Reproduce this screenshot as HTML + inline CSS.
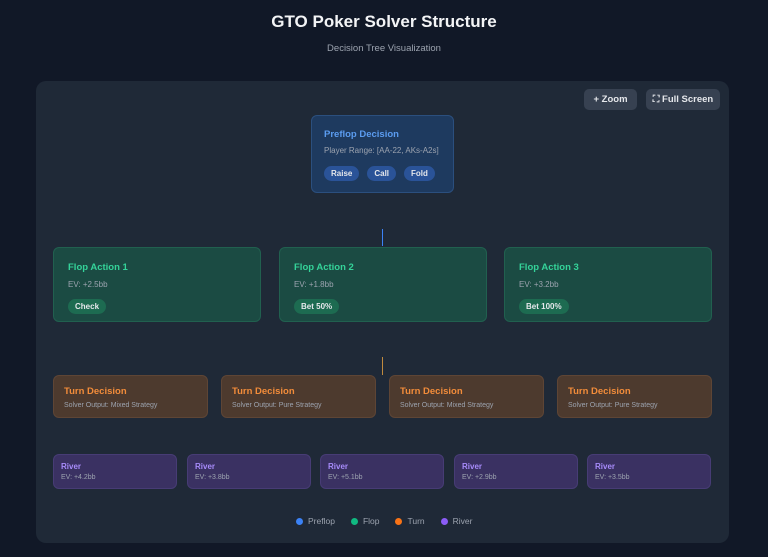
<!DOCTYPE html>
<html><head><style>
*{box-sizing:border-box;margin:0;padding:0}
body{width:768px;height:557px;background:#111827;font-family:"Liberation Sans",sans-serif;position:relative;overflow:hidden;color:#d1d5db}
.a{position:absolute}
h1{position:absolute;left:0;width:768px;top:12px;text-align:center;font-size:17px;font-weight:bold;color:#f3f4f6}
.sub{left:0;width:768px;top:43px;text-align:center;font-size:9.5px;color:#9ca3af}
.panel{left:36px;top:81px;width:693px;height:462px;background:#1f2937;border-radius:10px}
.btn{background:#374151;border-radius:5px;color:#e5e7eb;font-size:9.5px;font-weight:bold;display:flex;align-items:center;justify-content:center;height:21px;top:89px}
.box{border-radius:6px}
.pre{left:311px;top:115px;width:143px;height:78px;background:#1e3a5f;border:1px solid #2b4f7e}
.t{font-size:9.5px;font-weight:bold}
.s{font-size:8px;color:#9ca3af}
.pill{display:inline-block;border-radius:9px;font-size:8px;font-weight:bold;padding:3px 7px;margin-right:8px;color:#e5e7eb}
.flop{top:247px;width:208px;height:75px;background:#1b4b43;border:1px solid #21604f;padding:14px 14px}
.turn{top:375px;width:155px;height:43px;background:#4d3a2e;border:1px solid #5e4535;padding:10px 10px}
.riv{top:454px;width:124px;height:35px;background:#3a3162;border:1px solid #473c75;padding:7px 7px}
.dot{display:inline-block;width:7px;height:7px;border-radius:50%;margin-right:5px;vertical-align:-1px}
</style></head><body>
<h1>GTO Poker Solver Structure</h1>
<div class="a sub">Decision Tree Visualization</div>
<div class="a panel"></div>
<div class="a btn" style="left:584px;width:53px">+&nbsp;Zoom</div>
<div class="a btn" style="left:646px;width:74px">⛶&nbsp;Full Screen</div>
<div class="a box pre" style="padding:13px 12px">
<div class="t" style="color:#5b9cf0">Preflop Decision</div>
<div class="s" style="margin-top:6px">Player Range: [AA-22, AKs-A2s]</div>
<div style="margin-top:8px;white-space:nowrap"><span class="pill" style="background:#2a5398">Raise</span><span class="pill" style="background:#2a5398">Call</span><span class="pill" style="background:#2a5398">Fold</span></div>
</div>
<div class="a" style="left:382px;top:229px;width:1px;height:17px;background:#3b82f6"></div>
<div class="a" style="left:382px;top:357px;width:1px;height:18px;background:#c08a3e"></div>
<div class="a box flop" style="left:53px"><div class="t" style="color:#34d399">Flop Action 1</div><div class="s" style="margin-top:7px">EV: +2.5bb</div><div style="margin-top:7px"><span class="pill" style="background:#1d6b51">Check</span></div></div>
<div class="a box flop" style="left:279px"><div class="t" style="color:#34d399">Flop Action 2</div><div class="s" style="margin-top:7px">EV: +1.8bb</div><div style="margin-top:7px"><span class="pill" style="background:#1d6b51">Bet 50%</span></div></div>
<div class="a box flop" style="left:504px"><div class="t" style="color:#34d399">Flop Action 3</div><div class="s" style="margin-top:7px">EV: +3.2bb</div><div style="margin-top:7px"><span class="pill" style="background:#1d6b51">Bet 100%</span></div></div>
<div class="a box turn" style="left:53px"><div class="t" style="color:#f28c3a">Turn Decision</div><div class="s" style="font-size:7px;margin-top:5px">Solver Output: Mixed Strategy</div></div>
<div class="a box turn" style="left:221px"><div class="t" style="color:#f28c3a">Turn Decision</div><div class="s" style="font-size:7px;margin-top:5px">Solver Output: Pure Strategy</div></div>
<div class="a box turn" style="left:389px"><div class="t" style="color:#f28c3a">Turn Decision</div><div class="s" style="font-size:7px;margin-top:5px">Solver Output: Mixed Strategy</div></div>
<div class="a box turn" style="left:557px"><div class="t" style="color:#f28c3a">Turn Decision</div><div class="s" style="font-size:7px;margin-top:5px">Solver Output: Pure Strategy</div></div>
<div class="a box riv" style="left:53px"><div class="t" style="color:#a78bfa;font-size:8px">River</div><div class="s" style="font-size:7px;margin-top:3px">EV: +4.2bb</div></div>
<div class="a box riv" style="left:187px"><div class="t" style="color:#a78bfa;font-size:8px">River</div><div class="s" style="font-size:7px;margin-top:3px">EV: +3.8bb</div></div>
<div class="a box riv" style="left:320px"><div class="t" style="color:#a78bfa;font-size:8px">River</div><div class="s" style="font-size:7px;margin-top:3px">EV: +5.1bb</div></div>
<div class="a box riv" style="left:454px"><div class="t" style="color:#a78bfa;font-size:8px">River</div><div class="s" style="font-size:7px;margin-top:3px">EV: +2.9bb</div></div>
<div class="a box riv" style="left:587px"><div class="t" style="color:#a78bfa;font-size:8px">River</div><div class="s" style="font-size:7px;margin-top:3px">EV: +3.5bb</div></div>
<div class="a" style="left:296px;top:516px;font-size:8.5px;color:#9ca3af;white-space:nowrap">
<span class="dot" style="background:#3b82f6"></span>Preflop<span style="display:inline-block;width:16px"></span><span class="dot" style="background:#10b981"></span>Flop<span style="display:inline-block;width:16px"></span><span class="dot" style="background:#f97316"></span>Turn<span style="display:inline-block;width:16px"></span><span class="dot" style="background:#8b5cf6"></span>River
</div>
</body></html>
